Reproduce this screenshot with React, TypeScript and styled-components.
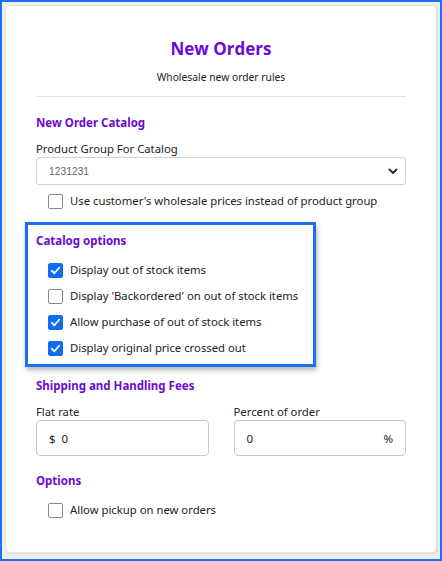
import * as React from 'react'
import styled, { createGlobalStyle } from 'styled-components'

const GlobalStyle = createGlobalStyle`
  html, body {
    margin: 0;
    padding: 0;
    background: #ffffff;
  }
  * {
    box-sizing: border-box;
  }
`

const Frame = styled.div`
  width: 442px;
  height: 561px;
  padding: 3px 3px 6px 3px;
  border: 2px solid #1a6ff5;
  background: #efeeea;
  font-family: 'Noto Sans', 'Open Sans', sans-serif;
  color: #222;
`

const Card = styled.div`
  height: 100%;
  background: #ffffff;
  border: 1px solid #e2e1dd;
  border-radius: 4px;
  box-shadow: 1px 1px 2px rgba(0, 0, 0, 0.08);
  padding: 32px 30px 0 30px;
`

const Header = styled.div`
  display: flex;
  flex-direction: column;
  align-items: center;
  padding-bottom: 12px;
  border-bottom: 1px solid #e3e3e3;
`

const Title = styled.h1`
  margin: 0;
  font-family: 'Open Sans', sans-serif;
  font-size: 17px;
  font-weight: 700;
  line-height: 22px;
  color: #6a0bd4;
`

const Subtitle = styled.div`
  margin-top: 10px;
  font-size: 10.3px;
  line-height: 14px;
  color: #222;
`

const Section = styled.section<{ $top: number }>`
  margin-top: ${(p) => p.$top}px;
`

const SectionTitle = styled.h2`
  margin: 0;
  font-size: 11.5px;
  font-weight: 700;
  line-height: 16px;
  color: #6a0bd4;
`

const Highlight = styled.section`
  width: 291px;
  margin: 12px 0 0 -11px;
  padding: 8px 8px 7px 8px;
  border: 3px solid #1b6ff3;
  box-shadow: 1px 3px 5px rgba(0, 0, 0, 0.3);
`

const Label = styled.div<{ $top?: number }>`
  margin-top: ${(p) => p.$top ?? 0}px;
  font-size: 11.3px;
  line-height: 14px;
  color: #222;
`

const SelectBox = styled.div`
  display: flex;
  align-items: center;
  justify-content: space-between;
  height: 28px;
  margin-top: 1px;
  padding: 0 6px 0 12px;
  border: 1px solid #cfd3d8;
  border-radius: 3px;
  font-family: 'Liberation Sans', Arial, sans-serif;
  font-size: 10.3px;
  color: #666;
`

const CheckList = styled.div<{ $top: number }>`
  display: flex;
  flex-direction: column;
  gap: 8px;
  margin-top: ${(p) => p.$top}px;
  padding-left: 12px;
`

const CheckRow = styled.label`
  display: flex;
  align-items: center;
  gap: 7px;
  font-size: 11.3px;
  line-height: 18px;
  white-space: nowrap;
  color: #222;
`

const Box = styled.span<{ $checked: boolean }>`
  display: inline-flex;
  align-items: center;
  justify-content: center;
  width: 15px;
  height: 15px;
  border-radius: 2px;
  border: 1px solid ${(p) => (p.$checked ? '#0f6df2' : '#8a8a8a')};
  background: ${(p) => (p.$checked ? '#0f6df2' : '#ffffff')};
  flex-shrink: 0;
`

const FieldGrid = styled.div`
  display: grid;
  grid-template-columns: 1fr 1fr;
  column-gap: 25px;
  margin-top: 11px;
`

const Field = styled.div`
  display: flex;
  flex-direction: column;
`

const InputBox = styled.div`
  display: flex;
  align-items: center;
  gap: 6px;
  height: 36px;
  margin-top: 1px;
  padding: 0 12px;
  border: 1px solid #c9c9c9;
  border-radius: 4px;
  font-size: 11.5px;
  color: #222;
`

const Value = styled.span`
  flex: 1;
`

function Check({ checked, children }: { checked: boolean; children: React.ReactNode }) {
  return (
    <CheckRow>
      <Box $checked={checked}>
        {checked && (
          <svg width="11" height="11" viewBox="0 0 12 12">
            <path d="M2 6.3 L4.8 9 L10 3" fill="none" stroke="#fff" strokeWidth="2" strokeLinecap="round" strokeLinejoin="round" />
          </svg>
        )}
      </Box>
      {children}
    </CheckRow>
  )
}

export default function App() {
  return (
    <Frame>
      <GlobalStyle />
      <Card>
        <Header>
          <Title>New Orders</Title>
          <Subtitle>Wholesale new order rules</Subtitle>
        </Header>

        <Section $top={18}>
          <SectionTitle>New Order Catalog</SectionTitle>
          <Label $top={11}>Product Group For Catalog</Label>
          <SelectBox>
            <span>1231231</span>
            <svg width="12" height="12" viewBox="0 0 12 12">
              <path d="M2.5 4.5 L6 8 L9.5 4.5" fill="none" stroke="#333" strokeWidth="2" strokeLinecap="round" strokeLinejoin="round" />
            </svg>
          </SelectBox>
          <CheckList $top={7}>
            <Check checked={false}>Use customer's wholesale prices instead of product group</Check>
          </CheckList>
        </Section>

        <Highlight>
          <SectionTitle>Catalog options</SectionTitle>
          <CheckList $top={12}>
            <Check checked>Display out of stock items</Check>
            <Check checked={false}>Display 'Backordered' on out of stock items</Check>
            <Check checked>Allow purchase of out of stock items</Check>
            <Check checked>Display original price crossed out</Check>
          </CheckList>
        </Highlight>

        <Section $top={11}>
          <SectionTitle>Shipping and Handling Fees</SectionTitle>
          <FieldGrid>
            <Field>
              <Label>Flat rate</Label>
              <InputBox>
                <span>$</span>
                <Value>0</Value>
              </InputBox>
            </Field>
            <Field>
              <Label>Percent of order</Label>
              <InputBox>
                <Value>0</Value>
                <span>%</span>
              </InputBox>
            </Field>
          </FieldGrid>
        </Section>

        <Section $top={17}>
          <SectionTitle>Options</SectionTitle>
          <CheckList $top={12}>
            <Check checked={false}>Allow pickup on new orders</Check>
          </CheckList>
        </Section>
      </Card>
    </Frame>
  )
}
